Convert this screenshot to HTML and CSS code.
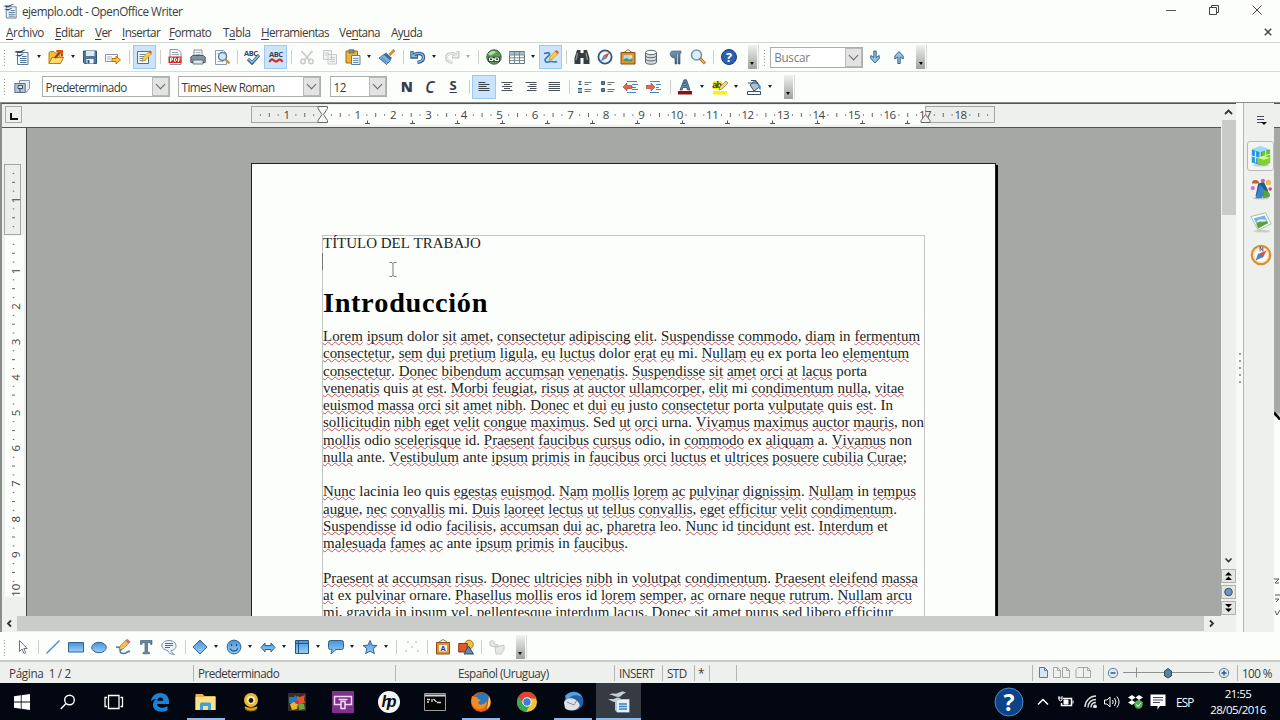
FILE: index.html
```html
<!DOCTYPE html>
<html lang="es">
<head>
    <meta charset="UTF-8">
    <title>ejemplo.odt - OpenOffice Writer</title>
    <link rel="stylesheet" href="styles.css">
</head>
<body>
    <svg class="sprite" width="0" height="0">
        <defs>
            <linearGradient id="blue" x1="0" y1="0" x2="0" y2="1"><stop offset="0" stop-color="#4594dc"/><stop offset="1" stop-color="#9bd0f8"/></linearGradient>
            <linearGradient id="steel" x1="0" y1="0" x2="0" y2="1"><stop offset="0" stop-color="#7a98b4"/><stop offset="1" stop-color="#3d5a75"/></linearGradient>
        </defs>
        <symbol id="doc" viewBox="0 0 16 16"><path d="M3.5 3.500h10.500v12H3.500z" fill="#f4f8fc" stroke="#64798c"/><path d="M0 3.500c3-3 5 0 8-2 1-.7 3-1.200 4-.6-3 .3-4 3-6.500 3.200C4 4.300 2 2.800 0 3.500zM1 7c2-2 4-.3 6-1.500 1-.6 2-.8 3-.5C8 5.500 7 7.500 5 7.500 4 7.500 2.500 6.300 1 7z" fill="#2e4a63"/><path d="M8 7.500h4.500M6 9.500h6.500M6 11.500h6.500M6 13.500h6.500" stroke="#4b7699"/></symbol>
        <symbol id="open" viewBox="0 0 16 16"><path d="M1 14.500V4l1-1.500h4L7.500 4H12v10.500z" fill="#f4bd35" stroke="#b98010"/><path d="M1 14.500L4 8.500h11.500l-3 6z" fill="#ffdc6c" stroke="#b98010"/><path d="M7 9l5-6M8.500 2H14v5.500" fill="none" stroke="#9d3910" stroke-width="2"/><path d="M8.500 1H15v6.500L12.800 5z" fill="#d9521c"/></symbol>
        <symbol id="save" viewBox="0 0 16 16"><path d="M1.500 2h13v12.500h-12l-1-1z" fill="#52789b" stroke="#345570"/><path d="M4 2h8.500v5H4z" fill="#dce8f2"/><path d="M4.500 10h7v4.500h-7z" fill="#f5f9fb"/><path d="M5.500 11h2v3.500h-2z" fill="#345570"/></symbol>
        <symbol id="mail" viewBox="0 0 16 16"><path d="M.5 5.500h12v7H.5z" fill="#fff" stroke="#8d9398"/><path d="M2 8h5M2 10h4" stroke="#aab"/><path d="M7 9.500h4v-2.500l4.500 4-4.500 4v-2.500H7z" fill="#ffc742" stroke="#b37411"/></symbol>
        <symbol id="edit" viewBox="0 0 16 16"><path d="M1.500 2.500h11v12h-11z" fill="#f5fafd" stroke="#668"/><path d="M3.500 5.500h6M3.500 7.500h5M3.500 9.500h4M3.500 11.500h6" stroke="#789"/><path d="M6 12.500l1-4L13.300 2l2.500 2.500L9.500 11z" fill="#f8cf3a" stroke="#a87d2a" stroke-width=".6"/><path d="M12.500 2.800L14 1.200l2 2-1.500 1.500z" fill="#d4503c"/></symbol>
        <symbol id="pdf" viewBox="0 0 16 16"><path d="M3 .5h8L14 3.500v12H3z" fill="#f7f8fa" stroke="#8794a1"/><path d="M5 3.500h6M5 5.500h7" stroke="#9aa8b4"/><path d="M1.500 7.500h13v6.500h-13z" fill="#d12a21"/><path d="M3.500 12.800V9H5.500v2h-2M7.500 12.300V9.200h1l1 .8v1.500l-1 .8zM11.500 13V9.200h2M11.500 11h1.700" fill="none" stroke="#fff"/></symbol>
        <symbol id="print" viewBox="0 0 16 16"><path d="M4 1h8v7H4z" fill="#fff" stroke="#889"/><path d="M5.500 3.500h5M5.500 5.500h5" stroke="#9aabb8"/><path d="M.8 8l2-1.500h10.500L15.200 8v5.500H.8z" fill="#84929d" stroke="#4d5a64"/><path d="M3 11h10v4H3z" fill="#dfe4e8" stroke="#4d5a64" stroke-width=".8"/></symbol>
        <symbol id="preview" viewBox="0 0 16 16"><path d="M1.500 1.500h8l3 3v11h-11z" fill="#f6f9fb" stroke="#8c9cab"/><path d="M3.500 4.500h3M3.500 12.500h6" stroke="#a9b5c0"/><circle cx="8.500" cy="7.500" r="4" fill="#cde6f6" stroke="#5f83a5" stroke-width="1.500"/><path d="M11.500 10.500l4 4" stroke="#d19034" stroke-width="2.400"/></symbol>
        <symbol id="cut" viewBox="0 0 16 16"><path d="M2.500 2l8 9M13.500 2l-8 9" stroke="#c9cbcb" stroke-width="1.800"/><circle cx="4" cy="12.500" r="2.200" fill="none" stroke="#c9cbcb" stroke-width="1.500"/><circle cx="12" cy="12.500" r="2.200" fill="none" stroke="#c9cbcb" stroke-width="1.500"/></symbol>
        <symbol id="copy" viewBox="0 0 16 16"><path d="M1.500 1.500h8v9h-8zM6 5.500h8.500v9.500H6z" fill="#f2f3f3" stroke="#c6c8c8"/><path d="M3 4h4M3 6h2M8 8.500h5M8 10.500h5M8 12.500h5" stroke="#c6c8c8"/></symbol>
        <symbol id="paste" viewBox="0 0 16 16"><path d="M1 2h11.500v12H1z" fill="#eeb13c" stroke="#9f6b16"/><path d="M4 .8h5v3H4z" fill="#8795a0" stroke="#4b5964" stroke-width=".8"/><path d="M6.500 6.500h8.500v9H6.500z" fill="#eef5fa" stroke="#617f9a"/><path d="M8 9.500h5.500M8 11.500h5.500M8 13.500h5.500" stroke="#7194b1"/></symbol>
        <symbol id="brush" viewBox="0 0 16 16"><path d="M15.500.8L10.500 6" stroke="#cb8f3c" stroke-width="2.800"/><path d="M7 3.500l6 5.500-2 2.500-6.500-6z" fill="#426d99"/><path d="M5 5.500l6.500 6-4 4L0 9z" fill="#77b4e6" stroke="#345f8b" stroke-width=".8"/><path d="M3 8.500l6 5.500M2 10l4.500 4" stroke="#426d99" stroke-width=".7"/></symbol>
        <symbol id="undo" viewBox="0 0 16 16"><path d="M2 2v6h6M2.500 7.500C5 3.500 13.500 3 13.500 8.500c0 3-2.500 4.500-6 5" fill="none" stroke="#315d87" stroke-width="3.400"/><path d="M2 2.500v5h5M3 7C5 3.500 13.500 3 13.500 8.500c0 3-2.500 4-5.500 4.800" fill="none" stroke="#89bae2" stroke-width="1.400"/></symbol>
        <symbol id="redo" viewBox="0 0 16 16"><path d="M14 2v6H8M13.500 7.500C11 3.500 2.500 3 2.500 8.500c0 3 2.500 4.500 6 5" fill="none" stroke="#c9cccc" stroke-width="3"/><path d="M13.500 3v4.500H9M12.500 7C11 4 3 3.500 3 8.500c0 2.500 2 4 5 4.700" fill="none" stroke="#f1f2f2" stroke-width="1.200"/></symbol>
        <symbol id="link" viewBox="0 0 16 16"><circle cx="8" cy="8" r="7.200" fill="#5e9d56" stroke="#335c3d"/><path d="M2 5c3-4 6-3.500 8-2-2 2-4 2-5 3.500z" fill="#b9dd9e"/><path d="M3.500 9h3.500v2.500H3.500zM9 9h3.500v2.500H9z" fill="none" stroke="#253c33" stroke-width="2.600"/><path d="M3.500 9h3.500v2.500H3.500zM9 9h3.500v2.500H9zM6 10.200h4" fill="none" stroke="#fff"/></symbol>
        <symbol id="table" viewBox="0 0 16 16"><path d="M.5 2.500h15v12H.5z" fill="#fff" stroke="#647684"/><path d="M.5 3h15v3H.5z" fill="#a9bdcb"/><path d="M.5 6h15M.5 8.800h15M.5 11.600h15M5.500 3v12M10.500 3v12" stroke="#748795"/></symbol>
        <symbol id="draw" viewBox="0 0 16 16"><path d="M1 4.500c4-1 6-1 5.500 1S1.500 9 2 11.500s4 1.500 6 1 3.500 1.500 6 0" fill="none" stroke="#3975b1" stroke-width="1.600"/><path d="M6 11.500l1-4L12.800 1.800l2.500 2.500L9.500 10z" fill="#f8cf3a" stroke="#a87d2a" stroke-width=".6"/><path d="M12 2.600L13.700 1l2.300 2.300-1.500 1.700z" fill="#df5a4a"/></symbol>
        <symbol id="binoc" viewBox="0 0 16 16"><path d="M3 1h3.500v3H9.500V1H13l2.500 8v6h-6V9h-3v6h-6V9z" fill="#333d40"/><path d="M3.500 4L2 11M12 4l1.500 7" stroke="#87908f" stroke-width="1.300"/></symbol>
        <symbol id="compass" viewBox="0 0 16 16"><circle cx="8" cy="8" r="6.600" fill="#eef5fb" stroke="#315881" stroke-width="1.800"/><path d="M12.500 3.500L9.500 9.500 6.500 6.500z" fill="#d94c31"/><path d="M3.500 12.500l3-6 3 3z" fill="#4f91ce"/></symbol>
        <symbol id="gallery" viewBox="0 0 16 16"><path d="M4 3.500L8 .5l4 3" fill="none" stroke="#8a6a42"/><path d="M1 3.500h14v11.500H1z" fill="#dd922e" stroke="#8a4f12"/><path d="M3.500 6h9v6.500h-9z" fill="#a8d8f3"/><path d="M3.500 12.500v-2l3-1.500 3 1.500 3-1v3z" fill="#5a9446"/><circle cx="10.500" cy="7.600" r="1.200" fill="#fff08a"/></symbol>
        <symbol id="db" viewBox="0 0 16 16"><path d="M2.500 3.500v9.500c0 3 11 3 11 0V3.500" fill="#d9dddf" stroke="#596872"/><ellipse cx="8" cy="3.500" rx="5.500" ry="2.200" fill="#fafcfc" stroke="#596872"/><path d="M2.500 6.700c0 2.700 11 2.700 11 0M2.500 9.900c0 2.700 11 2.700 11 0" fill="none" stroke="#596872"/></symbol>
        <symbol id="pilcrow" viewBox="0 0 16 16"><path d="M6 2h8v2.200h-1V15h-1.800V4.200H9.800V15H8V9C2 9 2 2 6 2z" fill="url(#steel)" stroke="#36536e" stroke-width=".6"/></symbol>
        <symbol id="zoom" viewBox="0 0 16 16"><circle cx="6.500" cy="6" r="5" fill="#d9edfa" stroke="#7795b0" stroke-width="1.600"/><path d="M10 9.500l5 5" stroke="#a86822" stroke-width="3"/><path d="M10.500 10l4 4" stroke="#efbb4f" stroke-width="1.200"/></symbol>
        <symbol id="down" viewBox="0 0 16 16"><path d="M6.800 2h2.400v6.500l3-2V9.500L8 14 3.800 9.500V6.500l3 2z" fill="#8fc2ea" stroke="#3e6487"/></symbol>
        <symbol id="up" viewBox="0 0 16 16"><path d="M6.800 14.500h2.400V8l3 2V7L8 2.500 3.800 7v3l3-2z" fill="#8fc2ea" stroke="#3e6487"/></symbol>
        <symbol id="styles" viewBox="0 0 16 16"><path d="M5.500 1.500h10v8l-3 3.500h-7z" fill="#e7edf2" stroke="#8598a8"/><path d="M.8 4.500h10.400v9H.8z" fill="#b4c5d3" stroke="#5d7588"/><path d="M4 6.500h4.500v3H4zM6 9.500v4" stroke="#354e63" fill="#dbe7ef"/></symbol>
        <symbol id="al" viewBox="0 0 16 16"><path d="M2.500 3.500h7M2.500 5.500h11M2.500 7.500h8M2.500 9.500h11M2.500 11.500h11" stroke="#3e454b"/></symbol>
        <symbol id="ac" viewBox="0 0 16 16"><path d="M2.500 3.500h11M5 5.500h6M3 7.500h10M5 9.500h6M2.500 11.500h11" stroke="#4c5358"/></symbol>
        <symbol id="ar" viewBox="0 0 16 16"><path d="M2.500 3.500h11M6.500 5.500h7M4.500 7.500h9M7 9.500h6.500M4 11.500h9.500" stroke="#4c5358"/></symbol>
        <symbol id="aj" viewBox="0 0 16 16"><path d="M2.500 3.500h11.500M2.500 5.500h11.500M2.500 7.500h11.500M2.500 9.500h11.500M2.500 11.500h11.500" stroke="#4c5358"/></symbol>
        <symbol id="num" viewBox="0 0 16 16"><path d="M1.500 2.500h3M3 2.500v3M1.500 5.500h3M1 9.500h4M2 9.500v4M4 9.500v4M1 13.500h4" stroke="#345d80" fill="none"/><path d="M7.500 3.500h7M7.500 5.500h4M7.500 10.500h7M7.500 12.500h6" stroke="#6d7376"/></symbol>
        <symbol id="bul" viewBox="0 0 16 16"><path d="M1.500 2.500h3v3h-3zM1.500 9.500h3v3h-3z" fill="#537da2" stroke="#263f56" stroke-width=".8"/><path d="M7.500 3.500h7M7.500 5.500h4M7.500 10.500h7M7.500 12.500h6" stroke="#6d7376"/></symbol>
        <symbol id="outd" viewBox="0 0 16 16"><path d="M4 2.500h10M9 5.500h6M9 8.500h4M9 10.500h6M4 13.500h9" stroke="#4789bc"/><path d="M0 8l4-4v2.500h5v3H4V12z" fill="#dc6855" stroke="#963c2d" stroke-width=".6"/></symbol>
        <symbol id="ind" viewBox="0 0 16 16"><path d="M4 2.500h10M10 5.500h5M10 8.500h3M10 10.500h5M4 13.500h9" stroke="#4789bc"/><path d="M9 8L5 4v2.500H0v3h5V12z" fill="#dc6855" stroke="#963c2d" stroke-width=".6"/></symbol>
        <symbol id="fontc" viewBox="0 0 16 16"><path d="M3 11L7 .8h2.500L13 11h-2.500l-.8-2.500H6L5.200 11zM6.800 6.500h2.400L8 3z" fill="#5d83a5" stroke="#2b445b" stroke-width=".7"/><path d="M1 12h14v3.500H1z" fill="#8e0e12"/></symbol>
        <symbol id="bucket" viewBox="0 0 16 16"><path d="M1.500 12.500h13v3h-13z" fill="#fff" stroke="#35536c"/><path d="M4 6l5-4.500 5 6L8 12z" fill="#adc2d2" stroke="#3b5266"/><path d="M2 4h9M5 1.500h5l4 6" fill="none" stroke="#3b5266"/><path d="M12 5.500c3 0 3 3 2.500 6-2-1.500-2-3-2.500-6z" fill="#4f91c2"/></symbol>
        <symbol id="pick" viewBox="0 0 16 16"><path d="M5.500 1.500v11l2.500-2.500 2 4.500 1.800-.8-2-4.200h3.400z" fill="#fff" stroke="#6a7580"/></symbol>
        <symbol id="line" viewBox="0 0 16 16"><path d="M1.500 14.500l13-13" stroke="#4b8fc7" stroke-width="1.500"/></symbol>
        <symbol id="rect" viewBox="0 0 16 16"><path d="M.5 3.500h15v9.500H.5z" fill="url(#blue)" stroke="#35628b"/></symbol>
        <symbol id="ell" viewBox="0 0 16 16"><ellipse cx="8" cy="8.500" rx="7.300" ry="5.200" fill="url(#blue)" stroke="#35628b"/></symbol>
        <symbol id="free" viewBox="0 0 16 16"><path d="M1 8c4 0 6 1 5 2.500S4 14 8 14.500s4-3 7-2" fill="none" stroke="#397cb8" stroke-width="1.600"/><path d="M4 11l1-4L11.500.8 14.500 3.500 8 10z" fill="#f5c050" stroke="#8b622a" stroke-width=".6"/><path d="M10.500 1.800L12.500 0l3 2.700-2 2z" fill="#d66"/></symbol>
        <symbol id="txt" viewBox="0 0 16 16"><path d="M2.500 1.500h11.500v4h-1.200L12 3.700H9.500V13l2 .5v1.300h-6.500v-1.300l2-.5V3.700H4.500l-.8 1.800H2.500z" fill="#6589a8" stroke="#345067" stroke-width=".6"/></symbol>
        <symbol id="call" viewBox="0 0 16 16"><path d="M8 1.500c9 0 9 10 2 10 0 1.500 1.500 3 3.500 4-4-.2-6-1.500-7-4C-1.500 10.500-1 1.500 8 1.500z" fill="#edf3f8" stroke="#7891a8"/><path d="M4 4.500h8M4 6.500h8M4 8.500h5" stroke="#536c83"/></symbol>
        <symbol id="dia" viewBox="0 0 16 16"><path d="M8 1l7 7-7 7-7-7z" fill="url(#blue)" stroke="#35628b"/></symbol>
        <symbol id="smile" viewBox="0 0 16 16"><circle cx="8" cy="8" r="6.900" fill="url(#blue)" stroke="#35628b"/><path d="M5.500 5v2M10.500 5v2M4 9.500c2 3.500 6 3.500 8 0" fill="none" stroke="#264b70" stroke-width="1.200"/></symbol>
        <symbol id="arr" viewBox="0 0 16 16"><path d="M1 8.500l4-4.500v2.500h6V4l4 4.500-4 4.500v-2.500H5V13z" fill="url(#blue)" stroke="#35628b"/></symbol>
        <symbol id="flow" viewBox="0 0 16 16"><path d="M1.500 1.500h13v13h-13z" fill="url(#blue)" stroke="#29547d"/><path d="M4.500 1.500v13M1.500 4.500h13" stroke="#29547d"/></symbol>
        <symbol id="bub" viewBox="0 0 16 16"><path d="M2.500 1.500h11q2 0 2 2v5q0 2-2 2H8l-5 4.500 1-4.500H2.500q-2 0-2-2v-5q0-2 2-2z" fill="url(#blue)" stroke="#35628b"/></symbol>
        <symbol id="star" viewBox="0 0 16 16"><path d="M8 1.500l2 4.700 5 .3-3.900 3.200 1.300 5L8 12l-4.400 2.700 1.300-5L1 6.500l5-.3z" fill="url(#blue)" stroke="#35628b"/></symbol>
        <symbol id="pts" viewBox="0 0 16 16"><path d="M3 2h2v2H3zM11 2h2v2h-2zM7 7h2v2H7zM1 11h2v2H1zM13 11h2v2h-2z" fill="#d4d8d8"/></symbol>
        <symbol id="shapes" viewBox="0 0 16 16"><circle cx="11" cy="5.500" r="4.300" fill="#f7c33d" stroke="#a8711b"/><path d="M.7 4.500h8.600v8.500H.7z" fill="#dd5b24" stroke="#953313"/><path d="M10.500 7l5 8H6z" fill="#6189b2" stroke="#2d4b6b"/></symbol>
        <symbol id="extr" viewBox="0 0 16 16"><path d="M1 2h4v3l4 1v2L1 7zM6 8l9-2v5l-3 4H7z" fill="#e6e8e8" stroke="#c5c8c8"/></symbol>
    </svg>

    <div class="window">
        <header class="titlebar">
            <svg class="ico"><use href="#doc"/></svg>
            <span class="caption">ejemplo.odt - OpenOffice Writer</span>
            <div class="winbtns">
                <svg width="10" height="10"><path d="M0 5.500h10" stroke="#555"/></svg>
                <svg width="10" height="10" fill="none" stroke="#444"><path d="M.5 2.500h7v7h-7zM2.500 2.500v-2h7v7h-2"/></svg>
                <svg width="10" height="10"><path d="M.5.500l9 9M9.500.500l-9 9" stroke="#444"/></svg>
            </div>
        </header>
        <nav class="menubar">
            <span class="m1"><i>A</i>rchivo</span><span class="m2"><i>E</i>ditar</span><span class="m3"><i>V</i>er</span><span class="m4"><i>I</i>nsertar</span><span class="m5"><i>F</i>ormato</span><span class="m6">T<i>a</i>bla</span><span class="m7"><i>H</i>erramientas</span><span class="m8">Ve<i>n</i>tana</span><span class="m9">Ay<i>u</i>da</span>
            <svg class="docclose" width="8" height="8"><path d="M.8.800l6.400 6.400M7.200.800L.8 7.200" stroke="#444" stroke-width="1.500"/></svg>
        </nav>

        <div class="toolbar standard">
            <b class="grip"></b>
            <a class="tb"><svg class="ico"><use href="#doc"/></svg></a><b class="dd"></b>
            <a class="tb"><svg class="ico"><use href="#open"/></svg></a><b class="dd"></b>
            <a class="tb"><svg class="ico"><use href="#save"/></svg></a>
            <a class="tb"><svg class="ico"><use href="#mail"/></svg></a><b class="sep"></b>
            <a class="tb on"><svg class="ico"><use href="#edit"/></svg></a><b class="sep"></b>
            <a class="tb"><svg class="ico"><use href="#pdf"/></svg></a>
            <a class="tb"><svg class="ico"><use href="#print"/></svg></a>
            <a class="tb"><svg class="ico"><use href="#preview"/></svg></a><b class="sep"></b>
            <a class="tb"><svg class="ico" viewBox="0 0 16 16"><text class="abc" x="0" y="6.500" textLength="14">ABC</text><path d="M4 10l4 4 7-8" fill="none" stroke="#345f86" stroke-width="3.200"/><path d="M4.500 10l3.500 3.500L14.500 6.500" fill="none" stroke="#8fc2e8" stroke-width="1.500"/></svg></a>
            <a class="tb on"><svg class="ico" viewBox="0 0 16 16"><text class="abc" x="1" y="8" textLength="14">ABC</text><path d="M1.500 13c1.500-3.500 3-3 4.500-1.500s2.500 1.500 4 0 3-1.500 4.500 1.500" fill="none" stroke="#d42b25" stroke-width="2.200"/></svg></a><b class="sep"></b>
            <a class="tb"><svg class="ico"><use href="#cut"/></svg></a>
            <a class="tb"><svg class="ico"><use href="#copy"/></svg></a>
            <a class="tb"><svg class="ico"><use href="#paste"/></svg></a><b class="dd"></b>
            <a class="tb"><svg class="ico"><use href="#brush"/></svg></a><b class="sep"></b>
            <a class="tb"><svg class="ico"><use href="#undo"/></svg></a><b class="dd"></b>
            <a class="tb"><svg class="ico"><use href="#redo"/></svg></a><b class="dd off"></b><b class="sep"></b>
            <a class="tb"><svg class="ico"><use href="#link"/></svg></a>
            <a class="tb"><svg class="ico"><use href="#table"/></svg></a><b class="dd"></b>
            <a class="tb on"><svg class="ico"><use href="#draw"/></svg></a><b class="sep"></b>
            <a class="tb"><svg class="ico"><use href="#binoc"/></svg></a>
            <a class="tb"><svg class="ico"><use href="#compass"/></svg></a>
            <a class="tb"><svg class="ico"><use href="#gallery"/></svg></a>
            <a class="tb"><svg class="ico"><use href="#db"/></svg></a>
            <a class="tb"><svg class="ico"><use href="#pilcrow"/></svg></a>
            <a class="tb"><svg class="ico"><use href="#zoom"/></svg></a><b class="sep"></b>
            <a class="tb"><svg class="ico" viewBox="0 0 16 16"><circle cx="8" cy="8" r="7.500" fill="#2f60ad" stroke="#173b77"/><text x="8" y="12.500" font-size="12.500" font-weight="bold" text-anchor="middle" fill="#fff">?</text></svg></a>
            <b class="more"></b>
            <b class="grip"></b>
            <div class="combo find"><span>Buscar</span><em></em></div>
            <a class="tb"><svg class="ico"><use href="#down"/></svg></a>
            <a class="tb"><svg class="ico"><use href="#up"/></svg></a>
            <b class="more"></b>
        </div>

        <div class="toolbar format">
            <b class="grip"></b>
            <a class="tb"><svg class="ico"><use href="#styles"/></svg></a>
            <div class="combo para"><span>Predeterminado</span><em></em></div>
            <div class="combo font"><span>Times New Roman</span><em></em></div>
            <div class="combo size"><span>12</span><em></em></div>
            <a class="tb bold">N</a><a class="tb ital">C</a><a class="tb under">S</a><b class="sep"></b>
            <a class="tb on"><svg class="ico"><use href="#al"/></svg></a>
            <a class="tb"><svg class="ico"><use href="#ac"/></svg></a>
            <a class="tb"><svg class="ico"><use href="#ar"/></svg></a>
            <a class="tb"><svg class="ico"><use href="#aj"/></svg></a><b class="sep"></b>
            <a class="tb"><svg class="ico"><use href="#num"/></svg></a>
            <a class="tb"><svg class="ico"><use href="#bul"/></svg></a>
            <a class="tb"><svg class="ico"><use href="#outd"/></svg></a>
            <a class="tb"><svg class="ico"><use href="#ind"/></svg></a><b class="sep"></b>
            <a class="tb"><svg class="ico"><use href="#fontc"/></svg></a><b class="dd"></b>
            <a class="tb"><svg class="ico" viewBox="0 0 16 16"><path d="M1 12h14v3.500H1zM1 2h9v8H1z" fill="#fff200"/><text x="0" y="8.500" font-size="9" font-weight="bold" fill="#36444c" textLength="10">ab</text><path d="M7 11l1-3.500 6-5.500 2 2-6 6z" fill="#f2d87a" stroke="#776022" stroke-width=".6"/></svg></a><b class="dd"></b>
            <a class="tb"><svg class="ico"><use href="#bucket"/></svg></a><b class="dd"></b>
            <b class="more"></b>
        </div>

        <main class="work">
            <div class="editor">
                <div class="hrow"><div class="tabtype"></div><svg id="hruler" width="1190" height="23"></svg></div>
                <div class="vrow">
                    <svg id="vruler" width="24" height="488"></svg>
                    <div class="canvas">
                        <article class="page">
                            <div class="frame">
                                <p class="doctitle">TÍTULO DEL TRABAJO</p>
                                <h1>Introducción</h1>
                                <p class="ln" style="width:597px"><u>Lorem</u> <u>ipsum</u> dolor <u>sit</u> <u>amet</u>, <u>consectetur</u> <u>adipiscing</u> <u>elit</u>. <u>Suspendisse</u> <u>commodo</u>, <u>diam</u> in <u>fermentum</u></p>
                                <p class="ln" style="width:586px"><u>consectetur</u>, <u>sem</u> <u>dui</u> <u>pretium</u> <u>ligula</u>, <u>eu</u> <u>luctus</u> dolor <u>erat</u> <u>eu</u> mi. <u>Nullam</u> <u>eu</u> ex porta leo <u>elementum</u></p>
                                <p class="ln" style="width:544px"><u>consectetur</u>. <u>Donec</u> <u>bibendum</u> <u>accumsan</u> <u>venenatis</u>. <u>Suspendisse</u> <u>sit</u> <u>amet</u> <u>orci</u> <u>at</u> <u>lacus</u> porta</p>
                                <p class="ln" style="width:581px"><u>venenatis</u> quis <u>at</u> <u>est</u>. <u>Morbi</u> <u>feugiat</u>, <u>risus</u> <u>at</u> <u>auctor</u> <u>ullamcorper</u>, <u>elit</u> mi <u>condimentum</u> <u>nulla</u>, <u>vitae</u></p>
                                <p class="ln" style="width:570px"><u>euismod</u> <u>massa</u> <u>orci</u> <u>sit</u> <u>amet</u> <u>nibh</u>. <u>Donec</u> et <u>dui</u> <u>eu</u> justo <u>consectetur</u> porta <u>vulputate</u> quis <u>est</u>. In</p>
                                <p class="ln" style="width:601px"><u>sollicitudin</u> <u>nibh</u> <u>eget</u> <u>velit</u> <u>congue</u> <u>maximus</u>. Sed <u>ut</u> <u>orci</u> urna. <u>Vivamus</u> <u>maximus</u> <u>auctor</u> <u>mauris</u>, non</p>
                                <p class="ln" style="width:589px"><u>mollis</u> odio <u>scelerisque</u> id. <u>Praesent</u> <u>faucibus</u> <u>cursus</u> odio, in <u>commodo</u> ex <u>aliquam</u> a. <u>Vivamus</u> non</p>
                                <p class="ln" style="width:584px"><u>nulla</u> ante. <u>Vestibulum</u> ante <u>ipsum</u> <u>primis</u> in <u>faucibus</u> <u>orci</u> <u>luctus</u> et <u>ultrices</u> <u>posuere</u> <u>cubilia</u> <u>Curae</u>;</p>
                                <p class="ln"></p>
                                <p class="ln" style="width:593px"><u>Nunc</u> lacinia leo quis <u>egestas</u> <u>euismod</u>. <u>Nam</u> <u>mollis</u> <u>lorem</u> <u>ac</u> <u>pulvinar</u> <u>dignissim</u>. <u>Nullam</u> in <u>tempus</u></p>
                                <p class="ln" style="width:574px"><u>augue</u>, <u>nec</u> <u>convallis</u> mi. <u>Duis</u> <u>laoreet</u> <u>lectus</u> <u>ut</u> <u>tellus</u> <u>convallis</u>, <u>eget</u> <u>efficitur</u> <u>velit</u> <u>condimentum</u>.</p>
                                <p class="ln" style="width:565px"><u>Suspendisse</u> id odio <u>facilisis</u>, <u>accumsan</u> <u>dui</u> <u>ac</u>, <u>pharetra</u> leo. <u>Nunc</u> id <u>tincidunt</u> <u>est</u>. <u>Interdum</u> et</p>
                                <p class="ln" style="width:305px"><u>malesuada</u> <u>fames</u> <u>ac</u> ante <u>ipsum</u> <u>primis</u> in <u>faucibus</u>.</p>
                                <p class="ln"></p>
                                <p class="ln" style="width:595px"><u>Praesent</u> <u>at</u> <u>accumsan</u> <u>risus</u>. <u>Donec</u> <u>ultricies</u> <u>nibh</u> in <u>volutpat</u> <u>condimentum</u>. <u>Praesent</u> <u>eleifend</u> <u>massa</u></p>
                                <p class="ln" style="width:589px"><u>at</u> ex <u>pulvinar</u> ornare. <u>Phasellus</u> <u>mollis</u> eros id <u>lorem</u> <u>semper</u>, <u>ac</u> ornare <u>neque</u> <u>rutrum</u>. <u>Nullam</u> <u>arcu</u></p>
                                <p class="ln" style="width:570px">mi, gravida in ipsum vel, pellentesque interdum lacus. Donec sit amet purus sed libero efficitur</p>
                                <svg class="ibeam" width="8" height="15" fill="none" stroke="#777"><path d="M.5.500h2.500l1 1 1-1h2.500M.5 14.500h2.500l1-1 1 1h2.500M4 1v13"/></svg>
                                <i class="caret"></i>
                            </div>
                        </article>
                    </div>
                </div>
                <div class="hscroll"><svg width="15" height="15"><path d="M9 4.500L6 7.500l3 3" fill="none" stroke="#333" stroke-width="1.800"/></svg><i></i><svg width="15" height="15"><path d="M6 4.500l3 3-3 3" fill="none" stroke="#333" stroke-width="1.800"/></svg></div>
            </div>
            <div class="vscroll">
                <svg width="15" height="16"><path d="M4 10l3.500-3.500 3.500 3.500" fill="none" stroke="#333" stroke-width="1.800"/></svg>
                <i class="thumb"></i>
                <i class="track"></i>
                <svg width="15" height="16"><path d="M4.500 5.500l3 3 3-3" fill="none" stroke="#333" stroke-width="1.600"/></svg>
                <svg class="nv" width="13" height="12"><path d="M3 5.500l3.500-3.500 3.500 3.500zM3 10l3.500-3.500L10 10z"/></svg>
                <svg class="nv" width="13" height="12"><circle cx="6.500" cy="6" r="3.800" fill="#6b96bd" stroke="#35566f"/></svg>
                <svg class="nv" width="13" height="12"><path d="M3 2l3.500 3.500L10 2zM3 6.500l3.500 3.500L10 6.500z"/></svg>
            </div>
            <div class="splitter"><i></i><i></i><i></i><i></i><i></i></div>
            <aside class="sidebar">
                <svg class="cfg" width="12" height="12"><path d="M1 2.500h7M1 5.500h7M1 8.500h5" stroke="#444a66"/><path d="M5 8h6L8 11z" fill="#112"/></svg>
                <a class="deck sel"><svg viewBox="0 0 24 24"><ellipse cx="12" cy="22" rx="9" ry="1.500" fill="#ccc"/><path d="M2 5l9-3.500L21 5v14l-9 3-10-3z" fill="#2a93df"/><path d="M2 5l9 3 10-3-9-4z" fill="#9bdcfa"/><path d="M2 12l9 3M11 8v13M6 7v12" stroke="#d5f0ff" stroke-width="1.300"/><path d="M13 8l9-3v13l-9 4z" fill="#6fc32c"/><path d="M8 14l7-2 7 2v6l-7 3-7-3z" fill="#80d232"/><path d="M8 14l7 2 7-2-7-2z" fill="#d4f78d"/><path d="M17 6v6M22 10l-9 3" stroke="#ebffc8"/></svg></a>
                <a class="deck"><svg viewBox="0 0 24 24"><ellipse cx="12" cy="22" rx="9" ry="1.500" fill="#ccc"/><path d="M9 6l6-2 4 8 2 8H6z" fill="#225c84"/><path d="M6 22l5-15 5 6-3 9z" fill="#3885c8"/><path d="M15 13c6 1 8 5 6 8l-7 1z" fill="#54a53e"/><path d="M2 6c0-5 8-5 8 0z" fill="#c0602b"/><circle cx="14" cy="3" r="2.300" fill="#b36bd0"/><circle cx="20" cy="5" r="3" fill="#f4ba56"/><circle cx="3" cy="11" r="2.300" fill="#cf72cf"/><circle cx="22" cy="12" r="2" fill="#dd4862"/></svg></a>
                <a class="deck"><svg viewBox="0 0 24 24"><ellipse cx="13" cy="22" rx="9" ry="1.500" fill="#ccc"/><path d="M1 6l16-4 6 12-14 7z" fill="#fff" stroke="#9cb79b"/><path d="M4 8l12-3 4 8-11 5z" fill="#74b5e5"/><path d="M7 15c2-4 4-4 6-2l2-3 5 3-11 6z" fill="#5b9e3a"/><path d="M8 12c3-4 6 0 9-2" fill="none" stroke="#e9f6fc" stroke-width="2"/></svg></a>
                <a class="deck"><svg viewBox="0 0 24 24"><circle cx="12" cy="12" r="10" fill="#fffaf0" stroke="#d68f31" stroke-width="2.500"/><circle cx="12" cy="12" r="8" fill="none" stroke="#f4d6a0"/><path d="M18 7l-4 8-5-4z" fill="#d65044"/><path d="M6 18l3-8 6 4z" fill="#4a86cf"/><path d="M11 8V3l3 5V3" fill="none" stroke="#554a85"/></svg></a>
            </aside>
            <div class="behind"><svg width="6" height="513"><path d="M0 308.500l6 7" stroke="#000" stroke-width="2.500"/><path d="M0 475h5l-4 4h4M1 491h5M1 495h4l-3 3M1 507l2 4 3-5" fill="none" stroke="#555"/></svg></div>
        </main>

        <div class="toolbar drawing">
            <b class="grip"></b>
            <a class="tb"><svg class="ico"><use href="#pick"/></svg></a><b class="sep"></b>
            <a class="tb"><svg class="ico"><use href="#line"/></svg></a>
            <a class="tb"><svg class="ico"><use href="#rect"/></svg></a>
            <a class="tb"><svg class="ico"><use href="#ell"/></svg></a>
            <a class="tb"><svg class="ico"><use href="#free"/></svg></a>
            <a class="tb"><svg class="ico"><use href="#txt"/></svg></a>
            <a class="tb"><svg class="ico"><use href="#call"/></svg></a><b class="sep"></b>
            <a class="tb"><svg class="ico"><use href="#dia"/></svg></a><b class="dd"></b>
            <a class="tb"><svg class="ico"><use href="#smile"/></svg></a><b class="dd"></b>
            <a class="tb"><svg class="ico"><use href="#arr"/></svg></a><b class="dd"></b>
            <a class="tb"><svg class="ico"><use href="#flow"/></svg></a><b class="dd"></b>
            <a class="tb"><svg class="ico"><use href="#bub"/></svg></a><b class="dd"></b>
            <a class="tb"><svg class="ico"><use href="#star"/></svg></a><b class="dd"></b><b class="sep"></b>
            <a class="tb"><svg class="ico"><use href="#pts"/></svg></a><b class="sep"></b>
            <a class="tb"><svg class="ico" viewBox="0 0 16 16"><path d="M4 3l4-2.500L12 3" fill="none" stroke="#777"/><path d="M1.500 3.500h13v11.500h-13z" fill="#df8f35" stroke="#8a4f12"/><path d="M4 6h8v6.500H4z" fill="#f4f7fb"/><text x="8" y="12" font-size="7.500" font-weight="bold" text-anchor="middle" fill="#253f7c">A</text></svg></a>
            <a class="tb"><svg class="ico"><use href="#shapes"/></svg></a><b class="sep"></b>
            <a class="tb"><svg class="ico"><use href="#extr"/></svg></a>
            <b class="more"></b>
        </div>

        <footer class="status">
            <span class="s-page">Página&nbsp; 1 / 2</span>
            <span class="s-style">Predeterminado</span>
            <span class="s-lang">Español (Uruguay)</span>
            <span class="s-ins">INSERT</span>
            <span class="s-std">STD</span>
            <span class="s-mod">*</span>
            <span class="s-sig"></span>
            <span class="s-rest"></span>
            <span class="s-view"><svg width="58" height="13" fill="none" stroke="#a3a7a5"><path d="M1.500 1.500h5l3 3v7h-8z" fill="#d5e6f6" stroke="#587ca3"/><path d="M6.500 1.500v3h3" stroke="#587ca3"/><path d="M15.500 1.500h4l3 3v7h-7zM19.500 1.500v3h3M24.500 1.500h4l3 3v7h-7zM28.500 1.500v3h3M42 1.500h-2l-2 2v8h7.500v-10zM45.500 1.500h4l3 3v7h-7M49.500 1.500v3h3"/></svg></span>
            <span class="s-zoom"><svg width="126" height="16"><g fill="#dce9f4" stroke="#5d7b98"><circle cx="6" cy="8" r="4.700"/><circle cx="117" cy="8" r="4.700"/></g><path d="M3.500 8h5M114.500 8h5M117 5.500v5" stroke="#28598c" stroke-width="1.500"/><path d="M16 7.500h91M29.500 2.500v10" stroke="#8f9290"/><path d="M57.500 6l3.500-2.500L64.500 6v5L61 13l-3.500-2z" fill="#5c8099" stroke="#35505f"/></svg></span>
            <span class="s-pct">100 %</span>
        </footer>
    </div>

    <div class="taskbar">
        <a class="task"><svg width="16" height="16" viewBox="0 0 16 16" fill="#fff"><path d="M0 2.300L6.800 1.300v6.200H0zM7.600 1.200L16 0v7.500H7.600zM0 8.400h6.800v6.300L0 13.700zM7.600 8.400H16V16l-8.400-1.200z"/></svg></a>
        <a class="task"><svg width="16" height="16" fill="none" stroke="#fff" stroke-width="1.400"><circle cx="9.500" cy="6" r="4.800"/><path d="M6 9.500L.8 15"/></svg></a>
        <a class="task"><svg width="20" height="16" fill="none" stroke="#fff" stroke-width="1.300"><path d="M4.500 1.500h10.500v13H4.500zM3 3.500H1v9h2M16.500 3.500h2v9h-2"/></svg></a>
        <a class="task"><svg width="20" height="20" viewBox="0 0 20 20"><path d="M1 9.500C1.500 4 5.500 1 10.300 1c5.500 0 9 3.800 8.700 9.500v1.500H7c.3 2.500 2.500 3.700 5 3.700 2 0 4-.6 5.500-1.500v4c-2 1-4 1.500-6.300 1.500C5.500 19.700 2.500 16 3 12c.3-2.300 1.600-4 3.500-5C4 7 2 8 1 9.500zM7.200 8.700h6c0-2-1-3.200-2.800-3.200S7.500 6.800 7.200 8.700z" fill="#1a83d8"/></svg></a>
        <a class="task run"><svg width="21" height="20"><path d="M.5 2h7l2 2h11v14H.5z" fill="#e9b64c"/><path d="M.5 5h20v13H.5z" fill="#ffe08a"/><path d="M5 18v-6q0-1.500 1.500-1.500h8Q16 10.500 16 12v6h-3v-4H8v4z" fill="#38a3df"/></svg></a>
        <a class="task"><svg width="18" height="20"><ellipse cx="9" cy="17" rx="6" ry="2.500" fill="#7b580e"/><circle cx="9" cy="8" r="7" fill="#e9b73c"/><circle cx="9" cy="8" r="4" fill="#fff1b2"/><circle cx="9" cy="8.500" r="2.400" fill="#24180a"/><path d="M3 15q6 5 12 0" fill="none" stroke="#dda926" stroke-width="2"/></svg></a>
        <a class="task"><svg width="20" height="20"><path d="M1 1h18v18H1z" fill="#352e30"/><path d="M2 5h5l1-2 2 2v5l-3 1H2z" fill="#1c7fbd"/><path d="M10 4l3 1 5-2-1 4 1 4-5 1-3-3z" fill="#e2562b"/><path d="M3 12l4-2 4 2-1 5-5 1z" fill="#f0b628"/><path d="M11 11l6 1 1 5-6 1z" fill="#69a839"/><circle cx="10" cy="10" r="2" fill="#cf276c"/></svg></a>
        <a class="task"><svg width="22" height="22"><path d="M0 0h22v22H0z" fill="#80308c"/><path d="M9 13.500H2.500v-8h17v8H13M6.500 8.500h9M9 10.500h4v7H9z" fill="none" stroke="#f1dcf4" stroke-width="1.500"/></svg></a>
        <a class="task"><svg width="22" height="22"><circle cx="11" cy="11" r="11" fill="#f4f6f8"/><text class="hp" x="3.500" y="15.500" textLength="15">hp</text></svg></a>
        <a class="task"><svg width="22" height="18"><path d="M.5.500h21v17H.5z" fill="#050505" stroke="#9a9c9d"/><path d="M1 1.500h20v2H1z" fill="#d5d8da"/><path d="M3 6.500h3M3 9h2M8 6v3M9.500 6l3 3M13 9.500h4" stroke="#ddd" stroke-width="1.300"/></svg></a>
        <a class="task run"><svg width="22" height="22"><circle cx="11" cy="11" r="10" fill="#e45e18"/><circle cx="12" cy="9" r="7.500" fill="#2d78b7"/><path d="M2 5c2 1 3 1 5 1 0 2 3 2 4 3-3 1-3 3-2 4 3 2 6-1 8-3 0 6-4 9-9 8C2 17 0 11 2 5z" fill="#f08a22"/><path d="M19 5c2 5 2 10-2 13 1-5 1-8 2-13z" fill="#ffce41"/></svg></a>
        <a class="task"><svg width="22" height="22"><circle cx="11" cy="11" r="10" fill="#f0c52d"/><path d="M2.300 6A10 10 0 0 1 20.500 7.500H11L7.500 13z" fill="#dc4435"/><path d="M2.300 6A10 10 0 0 0 10 21l4-7.500H7.500z" fill="#3da650"/><circle cx="11" cy="11" r="4.700" fill="#fff"/><circle cx="11" cy="11" r="3.700" fill="#3c7ce0"/></svg></a>
        <a class="task run"><svg width="24" height="22"><circle cx="13" cy="10" r="9.500" fill="#1e63a9"/><path d="M4 5c5-6 14-5 17 1-6-3-11-2-15 3z" fill="#57a2dd"/><path d="M3 12c1-5 8-6 12-3 2 2 5 4 3 7-4 5-12 4-14 1z" fill="#dfe3e8"/><path d="M6 11l7 3 3-5" fill="none" stroke="#888"/></svg></a>
        <a class="task run active"><svg width="22" height="22"><path d="M7 8h14.500v13.500H9L7 19z" fill="#a9cce9"/><path d="M9 9h12v12H9z" fill="#e5f1fa"/><path d="M11 13h8M11 15.500h8M11 18h8" stroke="#3a7fba" stroke-width="1.500"/><path d="M1 4c4-3 6 0 9-2s6-2 8 0c-4 0-4 4-8 4S4 3 1 4zM0 9c3-2 5 0 7-1.500s4-1 6 0c-3 0-3 3.500-6 3.500S3 8.500 0 9z" fill="#c4ced5"/></svg></a>
        <div class="tray">
            <svg class="t-help" width="30" height="30" viewBox="0 0 30 30"><circle cx="15" cy="15" r="14" fill="#0c4389" stroke="#4e8cca"/><text x="15" y="23.500" text-anchor="middle" font-size="23" font-weight="bold" fill="#fff">?</text></svg>
            <svg class="t-up" width="12" height="8"><path d="M1 6.500l5-5 5 5" fill="none" stroke="#fff" stroke-width="1.500"/></svg>
            <svg class="t-bat" width="16" height="14" fill="none" stroke="#fff"><path d="M5 3.500h8.500v7H3.500V8" stroke-width="1.500"/><path d="M15 5.500v3M0 3h4M1 1v4q1.500 2 3 0V1" /><path d="M6 5h4v4H6z" fill="#fff"/></svg>
            <svg class="t-wifi" width="13" height="13" fill="none" stroke="#ddd" stroke-width="1.400"><path d="M1 12C1 6 6 1 12 1M4 12.500c0-5 3.500-8 8-8M7 12.500c0-3 2-5 5-5"/><circle cx="11" cy="11.500" r="1.200" fill="#fff"/></svg>
            <svg class="t-snd" width="16" height="14" fill="none" stroke="#fff"><path d="M.5 5h2.500l3-3v10L3 9H.5zM8.500 5q1.500 2 0 4M10.500 3q3 4 0 8M12.800 1.500q4.500 5.500 0 11"/></svg>
            <svg class="t-drop" width="15" height="14"><path d="M4 0l3.500 2.500L4 5 0 2.500zM11 0l4 2.500L11 5 7.500 2.500zM4 5l3.500 2.500L4 10 0 7.500zM11 5l4 2.500L11 10 7.500 7.500z" fill="#fff"/><circle cx="10.500" cy="9.500" r="4.200" fill="#4db152"/><path d="M8.500 9.500l1.500 2 3-3.500" fill="none" stroke="#fff"/></svg>
            <svg class="t-note" width="16" height="16"><path d="M.5.500h15v11.500H10L7.500 15.500V12h-7z" fill="#fff"/><path d="M3 3.500h10M3 6h10M3 8.500h7" stroke="#445"/></svg>
            <span class="t-lang">ESP</span>
            <div class="clock">21:55<br>28/05/2016</div>
        </div>
    </div>
    <script src="script.js"></script>
</body>
</html>
```
FILE: styles.css
```css
* {
    margin: 0;
    padding: 0;
    box-sizing: border-box;
}

body {
    width: 1280px;
    height: 720px;
    overflow: hidden;
    font-family: 'Open Sans', 'Noto Sans', sans-serif;
    font-size: 11.7px;
    letter-spacing: -0.58px;
    color: #3a3c3b;
    background: #fcfefc;
    display: flex;
    flex-direction: column;
}

.sprite {
    position: absolute;
}

svg {
    display: block;
    flex: none;
}

svg text {
    letter-spacing: 0;
}

i, em {
    font-style: normal;
}

.window {
    display: flex;
    flex-direction: column;
    height: 683px;
}

/* title and menu */
.titlebar {
    height: 22px;
    display: flex;
    align-items: center;
    padding-left: 3px;
}

.ico {
    width: 16px;
    height: 16px;
}

.titlebar .ico {
    width: 15px;
}

.caption {
    margin-left: 4px;
    white-space: nowrap;
    letter-spacing: -0.45px;
}

.winbtns {
    margin-left: auto;
    display: flex;
    gap: 33px;
    padding-right: 18px;
    margin-top: -3px;
}

.menubar {
    height: 21px;
    display: flex;
    align-items: center;
    border-bottom: 1px solid #d3d5d3;
    padding-left: 6px;
}

.menubar span {
    white-space: nowrap;
}

.menubar i {
    text-decoration: underline;
    text-underline-offset: 2px;
}

.m1 { width: 49px; letter-spacing: -0.4px; }
.m2 { width: 40px; letter-spacing: -0.5px; }
.m3 { width: 27px; }
.m4 { width: 47px; }
.m5 { width: 54px; }
.m6 { width: 38px; letter-spacing: -0.4px; }
.m7 { width: 78px; }
.m8 { width: 52px; }

.docclose {
    margin-left: auto;
    margin-right: 8px;
}

/* toolbars */
.toolbar {
    height: 29px;
    display: flex;
    align-items: center;
    border-bottom: 1px solid #d8dad8;
}

.grip {
    width: 10.4px;
    height: 17px;
    flex: none;
    background: radial-gradient(circle, #9a9c9b 0.8px, transparent 1px) 3px 0 / 3px 3px repeat-y;
}

.tb {
    width: 23.23px;
    height: 24px;
    flex: none;
    display: flex;
    align-items: center;
    justify-content: center;
}

.on {
    background: #cce4fb;
    border: 1px solid #9bcbf5;
}

.abc {
    font-size: 7.5px;
    font-weight: bold;
    fill: #2f485e;
}

.dd {
    width: 10.8px;
    height: 4px;
    flex: none;
    display: flex;
    justify-content: center;
}

.dd::before {
    content: '';
    border: 2.5px solid transparent;
    border-top: 3px solid #222;
    border-bottom: 0;
    margin-left: -1px;
}

.off::before {
    border-top-color: #aaa;
}

.sep {
    width: 7.7px;
    height: 14px;
    flex: none;
    background: linear-gradient(#cbcdcb, #cbcdcb) 4px 0 / 1px 100% no-repeat;
}

.more {
    width: 9px;
    height: 24px;
    flex: none;
    margin-left: 7.5px;
    background: linear-gradient(#f0f1f0, #9fa19f);
    display: flex;
    align-items: flex-end;
    justify-content: center;
    padding-bottom: 4px;
    box-shadow: 1px 0 #fcfefc, 2px 0 #d8dad8;
}

.more::before {
    content: '';
    border: 2.5px solid transparent;
    border-top: 3px solid #000;
    border-bottom: 0;
}

.standard .more + .grip {
    margin-left: 3px;
}

.standard .tb + .more:last-child {
    margin-left: 6px;
}

.combo {
    height: 21px;
    border: 1px solid #acaeac;
    display: flex;
    justify-content: space-between;
    align-items: center;
    background: #fff;
    flex: none;
    white-space: nowrap;
}

.combo span {
    padding-left: 3px;
}

.combo em {
    width: 17px;
    height: 19px;
    background: #e2e3e2;
    border: 1px solid #b9bbb9;
    display: flex;
    justify-content: center;
    align-items: center;
}

.combo em::before {
    content: '';
    width: 6px;
    height: 6px;
    border: solid #666;
    border-width: 0 1.3px 1.3px 0;
    transform: translateY(-2px) rotate(45deg);
}

.find {
    width: 93px;
    color: #7a7c7b;
    letter-spacing: -0.3px;
}

.standard .combo + .tb {
    margin-left: 0.5px;
}

.format {
    height: 30px;
    border-bottom: 0;
    padding-bottom: 1px;
}

.para {
    width: 128px;
    margin-left: 8px;
}

.font {
    width: 143px;
    margin-left: 8px;
}

.size {
    width: 57px;
    margin: 0 8.500px 0 9px;
}

.bold, .ital, .under {
    font-size: 14.5px;
    font-weight: 800;
    color: #343b4a;
    letter-spacing: 0;
}

.ital {
    font-size: 15.5px;
    font-style: italic;
    font-weight: 600;
}

.under {
    font-size: 13px;
    font-weight: 700;
    text-decoration: underline;
    text-underline-offset: 2px;
    padding-bottom: 3px;
}

.format .dd + .tb {
    margin-left: 0.3px;
}

/* work area */
.work {
    height: 530px;
    display: flex;
    border-top: 1px solid #8b8d8b;
    background: #fcfefc;
}

.editor {
    width: 1221px;
    border-left: 2px solid #8b8d8b;
    border-top: 1px solid #555;
    background: #eef0ee;
    display: flex;
    flex-direction: column;
    overflow: hidden;
}

.hrow {
    height: 24px;
    display: flex;
    border-bottom: 1px solid #555;
    flex: none;
}

.tabtype {
    width: 17px;
    height: 17px;
    margin: 2px 20px 0 3px;
    border: 1px solid #aaacaa;
    flex: none;
    display: flex;
    align-items: center;
    justify-content: center;
}

.tabtype::before {
    content: '';
    width: 6px;
    height: 5px;
    margin-top: 3px;
    border: solid #111;
    border-width: 0 0 2px 2px;
}

.vrow {
    height: 488px;
    display: flex;
    flex: none;
}

.canvas {
    flex: 1;
    height: 488px;
    overflow: hidden;
    border-left: 1px solid #444;
    background: #a6a8a6;
    padding: 35px 0 0 224px;
}

.page {
    width: 745px;
    height: 520px;
    background: #fcfefc;
    border: 1px solid #222;
    box-shadow: 2px 2px 0 #000;
    padding: 71px 0 0 70px;
}

.frame {
    position: relative;
    width: 603px;
    height: 460px;
    border: 1px solid #c3c5c3;
    font: 14.96px/17.25px 'Liberation Serif', serif;
    letter-spacing: 0;
    font-variant-ligatures: none;
    font-kerning: none;
    color: #222;
}

.frame h1 {
    font-size: 28.3px;
    line-height: 32px;
    color: #000;
    margin: 34.5px 0 9.25px;
    letter-spacing: 0.65px;
}

.doctitle {
    margin-top: -1px;
}

.ln {
    height: 17.25px;
    white-space: nowrap;
    text-align-last: justify;
}

.ln u {
    text-decoration: underline wavy #c8505a 1px;
    text-decoration-skip-ink: none;
    text-underline-offset: 0;
}

.ibeam {
    position: absolute;
    left: 66px;
    top: 26px;
}

.caret {
    position: absolute;
    left: -1px;
    top: 17px;
    width: 1px;
    height: 17px;
    background: #777;
}

.hscroll {
    height: 15px;
    display: flex;
    flex: none;
}

.hscroll i {
    width: 1187px;
    background: #cacccA;
}

.vscroll {
    width: 15px;
    background: #eef0ee;
    border-top: 1px solid #555;
    display: flex;
    flex-direction: column;
    align-items: center;
}

.thumb {
    width: 14px;
    height: 95px;
    background: #c9cbc9;
}

.track {
    height: 338px;
}

.nv {
    border: 1px solid #b0b2b0;
    box-sizing: content-box;
    margin-bottom: 2px;
    background: #e4e6e4;
}

.splitter {
    width: 8px;
    border-right: 1px solid #b5b7b5;
    background: #f8faf8;
    display: flex;
    flex-direction: column;
    align-items: center;
    justify-content: center;
    gap: 5px;
}

.splitter i {
    width: 2px;
    height: 2px;
    background: #999;
}

.sidebar {
    width: 30px;
    background: #eef0ee;
    display: flex;
    flex-direction: column;
    align-items: center;
    padding: 11px 0 0 3px;
}

.cfg {
    margin: 0 0 15px 2px;
}

.deck {
    width: 27px;
    height: 30px;
    margin-bottom: 3px;
    border: 1px solid transparent;
    border-radius: 3px;
    display: flex;
    align-items: center;
    justify-content: center;
}

.deck svg {
    width: 22px;
    height: 22px;
}

.sel {
    border-color: #b9bbb9;
    background: #f2f4f2;
}

.behind {
    width: 6px;
    height: 514px;
    border-top: 1px solid #555;
    background: linear-gradient(#eef0ee 23px, #555 23px, #555 24px, #a6a8a6 24px, #a6a8a6 308px, #fcfefc 314px);
}

/* drawing bar */
.drawing {
    height: 30px;
    border-bottom: 2px solid #c9cbc9;
    padding-top: 2px;
}

.status {
    height: 21px;
    background: #eef0ee;
    display: flex;
    align-items: center;
}

.status span {
    height: 16px;
    line-height: 16px;
    white-space: nowrap;
    border-right: 1px solid #b4b6b4;
    flex: none;
}

.s-page { width: 194px; padding-left: 9px; letter-spacing: -0.35px; }
.s-style { width: 202px; padding-left: 4px; }
.s-lang { width: 219px; padding-left: 62px; letter-spacing: -0.5px; }
.s-ins { width: 48px; padding-left: 4px; }
.s-std { width: 32px; padding-left: 4px; }
.s-mod { width: 15px; padding-left: 3px; }
.s-sig { width: 27px; }
.s-rest { width: 296px; }
.s-view { width: 71px; padding: 1px 0 0 5px; }
.s-zoom { width: 134px; padding-left: 3px; }

.status .s-pct {
    padding-left: 4px;
    border: 0;
}

/* taskbar */
.taskbar {
    height: 37px;
    background: #020711;
    display: flex;
    color: #fff;
}

.task {
    width: 45.9px;
    height: 37px;
    flex: none;
    display: flex;
    align-items: center;
    justify-content: center;
}

.task:first-child {
    margin-left: -1px;
}

.run {
    background: linear-gradient(#8bb9ee, #8bb9ee) center bottom / 38px 2px no-repeat;
}

.active {
    background: linear-gradient(#8bb9ee, #8bb9ee) center bottom / 46px 2px no-repeat #363b43;
}

.hp {
    font: italic bold 16px 'Liberation Sans', sans-serif;
    fill: #111;
}

.tray {
    margin-left: auto;
    display: flex;
    align-items: center;
    padding-right: 14px;
}

.t-help { margin-right: 13px; }
.t-up { margin-right: 9px; }
.t-bat { margin-right: 10px; }
.t-wifi { margin-right: 7px; }
.t-snd { margin-right: 8px; }
.t-drop { margin-right: 7px; }
.t-note { margin-right: 10px; }

.t-lang {
    width: 17px;
    margin-right: 17px;
    letter-spacing: -0.8px;
}

.clock {
    width: 56px;
    text-align: center;
    font-size: 11.5px;
    line-height: 16px;
    letter-spacing: -0.55px;
    white-space: nowrap;
}
```
FILE: script.js
```js
// one centimetre on screen
const CM = 35.47;
const NS = 'http://www.w3.org/2000/svg';

function add(svg, tag, attrs, text) {
    const el = document.createElementNS(NS, tag);
    for (const k in attrs) el.setAttribute(k, attrs[k]);
    if (text) el.textContent = text;
    svg.appendChild(el);
    return el;
}

function horizontalRuler() {
    const svg = document.getElementById('hruler');
    const zero = 280.5;
    add(svg, 'rect', { x: zero, y: 1, width: 603, height: 20, fill: '#fcfefc' });
    add(svg, 'rect', { x: 209.5, y: 2.5, width: 71, height: 16, fill: '#eceeec', stroke: '#a4a6a4' });
    add(svg, 'rect', { x: 883.5, y: 2.5, width: 69, height: 16, fill: '#eceeec', stroke: '#a4a6a4' });
    for (let q = -7; q <= 75; q++) {
        const x = zero + q * CM / 4;
        if (q % 4 === 0) {
            if (q !== 0) add(svg, 'text', { x: x - 0.5, y: 15, 'text-anchor': 'middle', 'font-size': 11.5, fill: '#444', style: 'letter-spacing:-0.5px' }, String(Math.abs(q / 4)));
        } else {
            const h = q % 2 === 0 ? 4 : 1.5;
            add(svg, 'rect', { x: x - 0.5, y: 11 - h / 2, width: 1, height: h, fill: '#666' });
        }
    }
    // default tab stops every 1.27 cm
    for (let t = 1; t <= 13; t++) {
        const x = Math.round(zero + t * CM * 1.27) - 0.5;
        add(svg, 'path', { d: `M${x - 2.5} 19.500h5M${x} 16.500v3`, stroke: '#555' });
    }
    add(svg, 'path', { d: 'M276 2.500h9.500v2l-4 6 4 6v2h-9.500v-2l4-6-4-6z', fill: '#f6f8f6', stroke: '#666' });
    add(svg, 'path', { d: 'M883.500 10.500l4.500 6v2h-9v-2z', fill: '#f0f2f0', stroke: '#666' });
}

function verticalRuler() {
    const svg = document.getElementById('vruler');
    const zero = 107.5;
    add(svg, 'rect', { x: 3, y: zero, width: 19, height: 361, fill: '#fcfefc' });
    add(svg, 'rect', { x: 2.5, y: 36.5, width: 16, height: 70, fill: '#eceeec', stroke: '#a4a6a4' });
    for (let q = -7; q <= 40; q++) {
        const y = zero + q * CM / 4;
        if (q % 4 === 0) {
            if (q !== 0) add(svg, 'text', { x: 0, y: 0, transform: `translate(17.5 ${y}) rotate(-90)`, 'text-anchor': 'middle', 'font-size': 11.5, fill: '#444' }, String(Math.abs(q / 4)));
        } else {
            const w = q % 2 === 0 ? 3 : 1.5;
            add(svg, 'rect', { x: 11.5 - w / 2, y: y - 0.5, width: w, height: 1, fill: '#666' });
        }
    }
}

horizontalRuler();
verticalRuler();
```
